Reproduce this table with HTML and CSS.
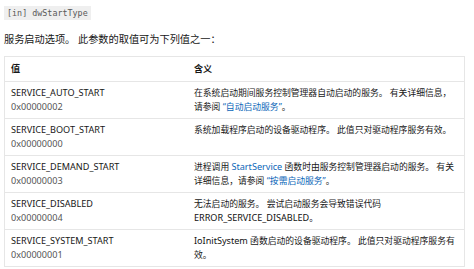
FILE: index.html
```html
<!DOCTYPE html>
<html lang="zh-CN">
<head>
<meta charset="utf-8">
<link rel="stylesheet" href="styles.css">
</head>
<body>
<div class="page">
  <div class="param"><code class="chip">[in] dwStartType</code></div>
  <p class="intro">服务启动选项。 此参数的取值可为下列值之一：</p>
  <table class="values">
    <thead>
      <tr><th class="c1">值</th><th>含义</th></tr>
    </thead>
    <tbody>
      <tr>
        <td><div class="name">SERVICE_AUTO_START</div><div class="hex">0x00000002</div></td>
        <td>在系统启动期间服务控制管理器自动启动的服务。 有关详细信息，请参阅 <a class="link">“自动启动服务”</a>。</td>
      </tr>
      <tr>
        <td><div class="name">SERVICE_BOOT_START</div><div class="hex">0x00000000</div></td>
        <td>系统加载程序启动的设备驱动程序。 此值只对驱动程序服务有效。</td>
      </tr>
      <tr>
        <td><div class="name">SERVICE_DEMAND_START</div><div class="hex">0x00000003</div></td>
        <td>进程调用 <a class="link lat">StartService</a> 函数时由服务控制管理器启动的服务。 有关详细信息，请参阅 <a class="link">“按需启动服务”</a>。</td>
      </tr>
      <tr>
        <td><div class="name">SERVICE_DISABLED</div><div class="hex">0x00000004</div></td>
        <td>无法启动的服务。 尝试启动服务会导致错误代码<br><span class="err lat">ERROR_SERVICE_DISABLED</span>。</td>
      </tr>
      <tr>
        <td><div class="name">SERVICE_SYSTEM_START</div><div class="hex">0x00000001</div></td>
        <td><span class="err lat">IoInitSystem</span> 函数启动的设备驱动程序。 此值只对驱动程序服务有效。</td>
      </tr>
    </tbody>
  </table>
</div>
</body>
</html>
```

FILE: styles.css
```css
html, body {
  margin: 0;
  padding: 0;
  background: #ffffff;
}
body {
  font-family: "Noto Sans", "Noto Sans CJK SC", sans-serif;
  color: #171717;
}
.page {
  padding: 3px 10px 0 4px;
}
.param {
  line-height: 14px;
}
.chip {
  display: inline-block;
  font-family: "DejaVu Sans Mono", "Liberation Mono", monospace;
  font-size: 8.4px;
  line-height: 14px;
  padding: 0 3px;
  background: #efefef;
  color: #5a5a5a;
}
.intro {
  margin: 12px 0 10px;
  font-size: 10.2px;
  line-height: 14px;
}
.values {
  width: 461px;
  border-collapse: collapse;
  border: 1px solid #e6e6e6;
  font-size: 8.8px;
  line-height: 14px;
}
.values th {
  text-align: left;
  font-weight: 700;
  font-size: 9.1px;
  padding: 5px 6px;
  border-bottom: 1px solid #e6e6e6;
}
.values th.c1 {
  width: 171px;
}
.values td {
  vertical-align: top;
  padding: 4px 6px 4px;
  height: 28px;
  border-bottom: 1px solid #e6e6e6;
}
.name,
.hex,
.lat {
  font-size: 9.1px;
}
.name {
  color: #171717;
}
.hex {
  color: #555555;
}
.link {
  color: #0b66b8;
  text-decoration: none;
}
.err {
  color: #111111;
}
```
